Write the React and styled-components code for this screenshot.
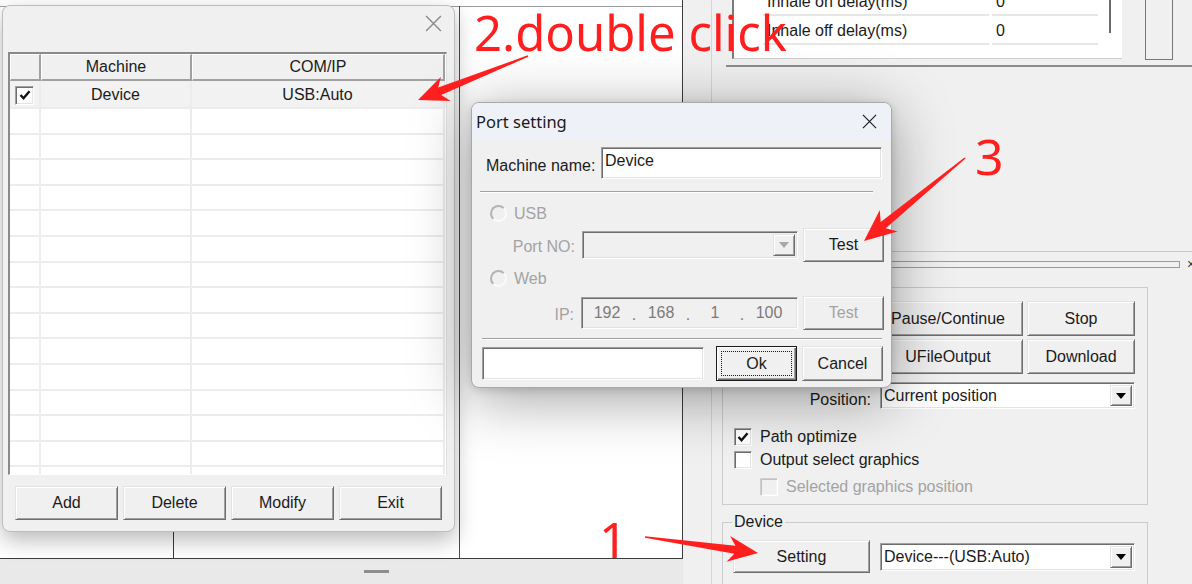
import React from "react";
import styled, { createGlobalStyle } from "styled-components";

const UI_FONT = `"Liberation Sans", Arial, sans-serif`;

const GlobalStyle = createGlobalStyle`
  html, body { margin: 0; padding: 0; background: #f0f0f0; }
  body { font-family: ${UI_FONT}; font-size: 16px; color: #1b1b1b; }
  * { box-sizing: border-box; }
`;

// classic win32 3d edges
const raised = `
  background: #f0f0f0;
  border: 1px solid;
  border-color: #e3e3e3 #6d6d6d #6d6d6d #e3e3e3;
  box-shadow: inset 1px 1px #ffffff, inset -1px -1px #a0a0a0;
`;
const sunken = `
  border: 1px solid;
  border-color: #a0a0a0 #ffffff #ffffff #a0a0a0;
  box-shadow: inset 1px 1px #6d6d6d, inset -1px -1px #e3e3e3;
`;

const Screen = styled.div`
  position: relative;
  width: 1192px;
  height: 584px;
  overflow: hidden;
  display: flex;
  background: #f0f0f0;
`;

/* ---------- background app ---------- */

const Canvas = styled.div`
  width: 683px;
  display: flex;
  flex-direction: column;
`;
const DrawArea = styled.div`
  height: 559px;
  flex: none;
  background: #fff;
  border-right: 1px solid #3c3c3c;
  border-bottom: 1px solid #3c3c3c;
  svg { display: block; }
`;
const HScroll = styled.div`
  flex: 1;
  background: #e9e9e9;
  display: flex;
  align-items: center;
  padding-left: 364px;
`;
const ScrollDash = styled.div`
  width: 25px;
  height: 3px;
  background: #8d8d8d;
`;
const Splitter = styled.div`
  width: 28px;
  background: #f0f0f0;
`;
const RightPanel = styled.div`
  flex: 1;
  display: flex;
  flex-direction: column;
  border-left: 1px solid #d6d6d6;
  background: #f0f0f0;
  & > * { flex: none; }
`;
const TopPane = styled.div`
  height: 67px;
  margin-left: 14px;
  border-bottom: 2px solid #8c8c8c;
  display: flex;
  align-items: flex-start;
`;
const PropList = styled.div`
  margin-left: 6px;
  width: 390px;
  height: 59px;
  background: #fff;
  border-left: 2px solid #7a7a7a;
  border-bottom: 1px solid #cfcfcf;
  overflow: hidden;
  display: flex;
`;
const PropRows = styled.div`
  margin-top: -13px;
`;
const PropRow = styled.div`
  display: flex;
  height: 29px;
  padding-left: 29px;
`;
const PropCell = styled.div`
  width: ${(p) => p.$w}px;
  margin-left: ${(p) => p.$gap || 0}px;
  border-bottom: 2px solid #e6e6e6;
  padding-left: 4px;
  line-height: 29px;
  white-space: nowrap;
`;
const ScrollTrack = styled.div`
  margin-left: auto;
  width: 13px;
`;
const ScrollThumb = styled.div`
  height: 33px;
  border-left: 2px solid #6a6a6a;
`;
const SideBox = styled.div`
  margin-left: 23px;
  width: 28px;
  height: 60px;
  border: 1px solid #777;
  border-top: none;
`;
const EmptyPane = styled.div`
  height: 185px;
  border-bottom: 1px solid #c9c9c9;
`;
const CaptionRow = styled.div`
  height: 35px;
  padding: 9px 0 0 11px;
  display: flex;
  align-items: flex-start;
`;
const Grip = styled.div`
  flex: 1;
  height: 7px;
  border: 1px solid #9b9b9b;
  border-left: none;
`;
const CaptionClose = styled.div`
  width: 12px;
  padding-left: 7px;
  font-size: 14px;
  line-height: 7px;
  color: #333;
`;
const Group = styled.fieldset`
  margin: ${(p) => p.$top || 0}px 0 0 10px;
  width: 426px;
  height: ${(p) => p.$h}px;
  padding: 0;
  border: 1px solid #cbcbcb;
  display: flex;
  flex-direction: column;
  min-inline-size: auto;
`;
const Legend = styled.legend`
  margin-left: 9px;
  padding: 0 2px;
  line-height: 18px;
`;
const OutputButtons = styled.div`
  margin-top: 13px;
  padding-right: 12px;
  display: grid;
  grid-template-columns: 150px 108px;
  column-gap: 4px;
  row-gap: 3px;
  justify-content: end;
`;
const PositionRow = styled.div`
  margin-top: 8px;
  padding-right: 12px;
  display: flex;
  justify-content: flex-end;
  align-items: flex-end;
  gap: 9px;
`;
const FieldLabel = styled.span`
  color: ${(p) => (p.$disabled ? "#a3a3a3" : "#1b1b1b")};
  white-space: nowrap;
  padding-top: ${(p) => p.$drop || 0}px;
`;
const CheckList = styled.div`
  margin-top: 19px;
  padding-left: 11px;
  display: flex;
  flex-direction: column;
  gap: 5px;
`;
const CheckRow = styled.div`
  display: flex;
  align-items: center;
  gap: 8px;
  padding-left: ${(p) => p.$indent || 0}px;
  margin-top: ${(p) => p.$top || 0}px;
  color: ${(p) => (p.$disabled ? "#a3a3a3" : "#1b1b1b")};
  white-space: nowrap;
`;
const Box = styled.span`
  width: ${(p) => p.$size || 18}px;
  height: ${(p) => p.$size || 18}px;
  flex: none;
  display: inline-flex;
  align-items: center;
  justify-content: center;
  background: ${(p) => (p.$disabled ? "#f0f0f0" : "#fff")};
  border: 1px solid;
  border-color: ${(p) => (p.$disabled ? "#d0d0d0 #fff #fff #d0d0d0" : "#a0a0a0 #fff #fff #a0a0a0")};
  box-shadow: ${(p) =>
    p.$disabled ? "inset 1px 1px #c0c0c0, inset -1px -1px #f4f4f4" : "inset 1px 1px #6d6d6d, inset -1px -1px #e3e3e3"};
`;
const DeviceRow = styled.div`
  margin-top: 9px;
  padding-left: 10px;
  display: flex;
  align-items: center;
  gap: 10px;
`;

/* ---------- shared controls ---------- */

const WinButton = styled.button`
  ${raised}
  width: ${(p) => p.$w}px;
  height: ${(p) => p.$h}px;
  flex: none;
  padding: 0;
  display: flex;
  align-items: center;
  justify-content: center;
  font: 16px ${UI_FONT};
  color: ${(p) => (p.$disabled ? "#a3a3a3" : "#1b1b1b")};
  white-space: nowrap;
`;
const DefaultButton = styled(WinButton)`
  border-color: #1a1a1a;
  box-shadow: inset 1px 1px #ffffff, inset -1px -1px #6d6d6d, inset -2px -2px #a0a0a0;
`;
const FocusRing = styled.span`
  width: calc(100% - 8px);
  height: calc(100% - 8px);
  border: 1px dotted #1a1a1a;
  display: flex;
  align-items: center;
  justify-content: center;
`;
const Field = styled.div`
  ${sunken}
  width: ${(p) => (p.$w ? `${p.$w}px` : "auto")};
  flex: ${(p) => (p.$w ? "none" : 1)};
  height: ${(p) => p.$h}px;
  margin-left: ${(p) => (p.$push ? "auto" : "0")};
  background: ${(p) => (p.$disabled ? "#f0f0f0" : "#fff")};
  display: flex;
  align-items: ${(p) => (p.$top ? "flex-start" : "center")};
  padding: ${(p) => (p.$top ? "4px 0 0 3px" : "0 0 0 3px")};
  white-space: nowrap;
`;
const ComboText = styled.span`
  flex: 1;
`;
const ComboButton = styled.span`
  ${raised}
  width: 22px;
  height: calc(100% - 4px);
  margin-right: 2px;
  display: flex;
  align-items: center;
  justify-content: center;
  &::after {
    content: "";
    border-left: 5px solid transparent;
    border-right: 5px solid transparent;
    border-top: 6px solid ${(p) => (p.$disabled ? "#a8a8a8" : "#000")};
  }
`;
const Radio = styled.span`
  width: 17px;
  height: 17px;
  border-radius: 50%;
  border: 2px solid;
  border-color: #b4b4b4 #fafafa #fafafa #b4b4b4;
  background: #f0f0f0;
  flex: none;
`;
const IpPart = styled.span`
  width: ${(p) => (p.$dot ? 10 : 44)}px;
  text-align: center;
  color: #7d7b78;
  padding-top: ${(p) => (p.$dot ? 4 : 0)}px;
`;

/* ---------- machine list dialog ---------- */

const ListDialog = styled.div`
  position: absolute;
  left: 2px;
  top: 5px;
  width: 453px;
  height: 527px;
  background: #f0f0f0;
  border: 1px solid #bdbdbd;
  border-radius: 8px;
  box-shadow: 0 8px 22px rgba(0, 0, 0, 0.28);
  display: flex;
  flex-direction: column;
  padding: 0 7px 0 5px;
`;
const ListTitleBar = styled.div`
  height: 46px;
  flex: none;
  display: flex;
  justify-content: flex-end;
  padding: 9px 5px 0 0;
  svg { display: block; }
`;
const Table = styled.div`
  height: 423px;
  flex: none;
  background: #fff;
  border-left: 2px solid #8a8a8a;
  border-top: 2px solid #8a8a8a;
  border-right: 1px solid #e0e0e0;
  border-bottom: 1px solid #fff;
  overflow: hidden;
`;
const TableRow = styled.div`
  display: grid;
  grid-template-columns: 31px 151px 253px;
  height: ${(p) => p.$h}px;
  background: ${(p) => (p.$shade ? "#f2f2f2" : "#fff")};
`;
const HeadCell = styled.div`
  background: #f0f0f0;
  border-top: 1px solid #fff;
  border-left: 1px solid #fff;
  border-right: 2px solid #a0a0a0;
  border-bottom: 2px solid #a0a0a0;
  display: flex;
  align-items: center;
  justify-content: center;
`;
const BodyCell = styled.div`
  border-right: 2px solid #ececec;
  border-bottom: 2px solid #ececec;
  display: flex;
  align-items: center;
  justify-content: center;
  padding-top: 2px;
`;
const ListButtons = styled.div`
  margin-top: 11px;
  padding-left: 7px;
  display: flex;
  gap: 5px;
`;

/* ---------- port setting dialog ---------- */

const PortDialog = styled.div`
  position: absolute;
  left: 471px;
  top: 102px;
  width: 421px;
  background: #f0f0f0;
  border: 1px solid #a9a9a9;
  border-radius: 8px;
  overflow: hidden;
  box-shadow: 0 10px 60px rgba(0, 0, 0, 0.38), 0 2px 8px rgba(0, 0, 0, 0.15);
`;
const PortTitle = styled.div`
  height: 36px;
  background: #eef2f8;
  display: flex;
  align-items: center;
  justify-content: space-between;
  padding: 0 14px 0 4px;
  font-family: "Noto Sans", sans-serif;
  font-size: 16.5px;
  color: #1a1a1a;
  svg { display: block; }
`;
const PortBody = styled.div`
  padding: 8px 7px 6px 10px;
  display: flex;
  flex-direction: column;
`;
const NameRow = styled.div`
  display: flex;
  align-items: center;
  padding: 0 2px 0 4px;
`;
const Etched = styled.div`
  margin: ${(p) => p.$top}px ${(p) => p.$right}px 0 ${(p) => p.$left}px;
  border-top: 1px solid #a0a0a0;
  border-bottom: 1px solid #fff;
`;
const RadioRow = styled.div`
  margin-top: ${(p) => p.$top}px;
  padding-left: 8px;
  display: flex;
  align-items: center;
  gap: 7px;
  height: 17px;
  color: #a3a3a3;
`;
const PortRow = styled.div`
  margin-top: ${(p) => p.$top}px;
  display: flex;
  align-items: center;
  gap: 5px;
`;
const RowLabel = styled.span`
  width: 93px;
  margin-right: 2px;
  text-align: right;
  color: #a3a3a3;
  padding-top: 4px;
`;

/* ---------- annotations ---------- */

const Overlay = styled.svg`
  position: absolute;
  left: 0;
  top: 0;
  pointer-events: none;
`;
const Note = styled.div`
  position: absolute;
  left: ${(p) => p.$x}px;
  top: ${(p) => p.$y}px;
  font-family: "Noto Sans", sans-serif;
  font-size: ${(p) => p.$size}px;
  line-height: 1;
  color: #ff1f1f;
  white-space: nowrap;
  pointer-events: none;
`;

function arrowPoints(x1, y1, x2, y2, headLen = 30, headW = 13, shaft = 4) {
  const dx = x2 - x1;
  const dy = y2 - y1;
  const len = Math.hypot(dx, dy);
  const ux = dx / len;
  const uy = dy / len;
  const nx = -uy;
  const ny = ux;
  const bx = x2 - ux * headLen;
  const by = y2 - uy * headLen;
  const jx = x2 - ux * headLen * 0.78;
  const jy = y2 - uy * headLen * 0.78;
  const pts = [
    [x1 + nx * 0.8, y1 + ny * 0.8],
    [jx + nx * shaft, jy + ny * shaft],
    [bx + nx * headW, by + ny * headW],
    [x2, y2],
    [bx - nx * headW, by - ny * headW],
    [jx - nx * shaft, jy - ny * shaft],
    [x1 - nx * 0.8, y1 - ny * 0.8],
  ];
  return pts.map((p) => p.map((v) => v.toFixed(1)).join(",")).join(" ");
}

const CloseX = ({ size, color }) => (
  <svg width={size} height={size} viewBox="0 0 16 16">
    <path d="M1 1 L15 15 M15 1 L1 15" stroke={color} strokeWidth="1.3" fill="none" />
  </svg>
);

const Check = () => (
  <svg width="12" height="12" viewBox="0 0 12 12">
    <path d="M1.5 6 L4.5 9.2 L10.5 2.2" stroke="#111" strokeWidth="2.4" fill="none" />
  </svg>
);

const Combo = ({ w, h, text, disabled }) => (
  <Field $w={w} $h={h} $disabled={disabled}>
    <ComboText>{text}</ComboText>
    <ComboButton $disabled={disabled} />
  </Field>
);

const listRows = Array.from({ length: 16 }, (_, i) =>
  i === 0 ? { on: true, name: "Device", port: "USB:Auto" } : { on: false, name: "", port: "" }
);

export default function App() {
  return (
    <>
      <GlobalStyle />
      <Screen>
        <Canvas>
          <DrawArea>
            <svg width="682" height="558">
              <line x1="0" y1="6.5" x2="682" y2="6.5" stroke="#9d9d9d" />
              <line x1="173.5" y1="6" x2="173.5" y2="558" stroke="#3a3a3a" />
              <line x1="459.5" y1="6" x2="459.5" y2="558" stroke="#4a4a4a" />
            </svg>
          </DrawArea>
          <HScroll>
            <ScrollDash />
          </HScroll>
        </Canvas>
        <Splitter />
        <RightPanel>
          <TopPane>
            <PropList>
              <PropRows>
                <PropRow>
                  <PropCell $w={226}>Inhale on delay(ms)</PropCell>
                  <PropCell $w={106} $gap={3}>0</PropCell>
                </PropRow>
                <PropRow>
                  <PropCell $w={226}>Inhale off delay(ms)</PropCell>
                  <PropCell $w={106} $gap={3}>0</PropCell>
                </PropRow>
              </PropRows>
              <ScrollTrack>
                <ScrollThumb />
              </ScrollTrack>
            </PropList>
            <SideBox />
          </TopPane>
          <EmptyPane />
          <CaptionRow>
            <Grip />
            <CaptionClose>×</CaptionClose>
          </CaptionRow>
          <Group $h={218}>
            <OutputButtons>
              <WinButton $h={35}>Pause/Continue</WinButton>
              <WinButton $h={35}>Stop</WinButton>
              <WinButton $h={35}>UFileOutput</WinButton>
              <WinButton $h={35}>Download</WinButton>
            </OutputButtons>
            <PositionRow>
              <FieldLabel>Position:</FieldLabel>
              <Combo w={255} h={27} text="Current position" />
            </PositionRow>
            <CheckList>
              <CheckRow>
                <Box>
                  <Check />
                </Box>
                Path optimize
              </CheckRow>
              <CheckRow>
                <Box />
                Output select graphics
              </CheckRow>
              <CheckRow $indent={26} $top={4} $disabled>
                <Box $disabled />
                Selected graphics position
              </CheckRow>
            </CheckList>
          </Group>
          <Group $h={90} $top={8}>
            <Legend>Device</Legend>
            <DeviceRow>
              <WinButton $w={137} $h={33}>
                Setting
              </WinButton>
              <Combo w={255} h={28} text="Device---(USB:Auto)" />
            </DeviceRow>
          </Group>
        </RightPanel>

        <ListDialog>
          <ListTitleBar>
            <CloseX size={17} color="#8a8a8a" />
          </ListTitleBar>
          <Table>
            <TableRow $h={27}>
              <HeadCell />
              <HeadCell>Machine</HeadCell>
              <HeadCell>COM/IP</HeadCell>
            </TableRow>
            {listRows.map((r, i) => (
              <TableRow key={i} $h={i === 0 ? 28 : 25.6} $shade={r.on}>
                <BodyCell>
                  {r.on && (
                    <Box $size={19}>
                      <Check />
                    </Box>
                  )}
                </BodyCell>
                <BodyCell>{r.name}</BodyCell>
                <BodyCell>{r.port}</BodyCell>
              </TableRow>
            ))}
          </Table>
          <ListButtons>
            {["Add", "Delete", "Modify", "Exit"].map((b) => (
              <WinButton key={b} $w={103} $h={34}>
                {b}
              </WinButton>
            ))}
          </ListButtons>
        </ListDialog>

        <PortDialog>
          <PortTitle>
            Port setting
            <CloseX size={15} color="#222" />
          </PortTitle>
          <PortBody>
            <NameRow>
              <FieldLabel $drop={5}>Machine name:</FieldLabel>
              <Field $w={281} $h={32} $top $push>
                Device
              </Field>
            </NameRow>
            <Etched $top={12} $right={11} $left={-2} />
            <RadioRow $top={12}>
              <Radio />
              USB
            </RadioRow>
            <PortRow $top={6}>
              <RowLabel>Port NO:</RowLabel>
              <Combo w={216} h={28} text="" disabled />
              <WinButton $w={81} $h={34}>
                Test
              </WinButton>
            </PortRow>
            <RadioRow $top={8}>
              <Radio />
              Web
            </RadioRow>
            <PortRow $top={9}>
              <RowLabel>IP:</RowLabel>
              <Field $w={217} $h={32} $disabled>
                <IpPart>192</IpPart>
                <IpPart $dot>.</IpPart>
                <IpPart>168</IpPart>
                <IpPart $dot>.</IpPart>
                <IpPart>1</IpPart>
                <IpPart $dot>.</IpPart>
                <IpPart>100</IpPart>
              </Field>
              <WinButton $w={81} $h={34} $disabled>
                Test
              </WinButton>
            </PortRow>
            <Etched $top={8} $right={2} $left={0} />
            <PortRow $top={6}>
              <Field $w={222} $h={33} />
              <DefaultButton $w={81} $h={35} style={{ marginLeft: 7 }}>
                <FocusRing>Ok</FocusRing>
              </DefaultButton>
              <WinButton $w={81} $h={35}>
                Cancel
              </WinButton>
            </PortRow>
          </PortBody>
        </PortDialog>

        <Overlay width="1192" height="584">
          <polygon points={arrowPoints(528, 56, 418, 100, 30, 13, 4)} fill="#ff1f1f" />
          <polygon points={arrowPoints(965, 158, 864, 241, 32, 14, 4)} fill="#ff1f1f" />
          <polygon points={arrowPoints(645, 537, 758, 553, 30, 13, 4)} fill="#ff1f1f" />
        </Overlay>
        <Note $x={474} $y={8} $size={49}>
          2.double click
        </Note>
        <Note $x={975} $y={131} $size={50}>
          3
        </Note>
        <Note $x={599} $y={514} $size={50}>
          1
        </Note>
      </Screen>
    </>
  );
}
